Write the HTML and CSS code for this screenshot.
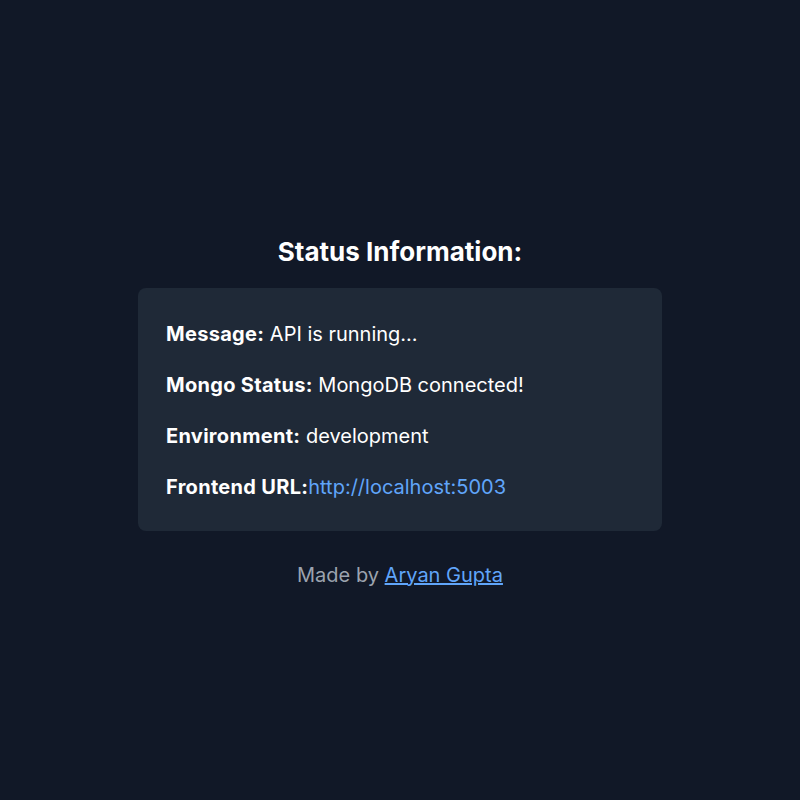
FILE: index.html
```html
<!DOCTYPE html>
<html lang="en">

<head>
    <meta charset="UTF-8">
    <meta name="viewport" content="width=device-width, initial-scale=1.0">
    <title>API Status</title>
    <link rel="stylesheet" href="styles.css">
</head>

<body>
    <main class="page">
        <h1 class="title">Status Information:</h1>

        <div class="card">
            <p class="row"><strong>Message:</strong> API is running...</p>
            <p class="row"><strong>Mongo Status:</strong> MongoDB connected!</p>
            <p class="row"><strong>Environment:</strong> development</p>
            <p class="row"><strong>Frontend URL:</strong><a class="url" href="#">http://localhost:5003</a></p>
        </div>

        <p class="footer">Made by <a href="#">Aryan Gupta</a></p>
    </main>
</body>

</html>
```

FILE: styles.css
```css
* {
    margin: 0;
    padding: 0;
    box-sizing: border-box;
}

body {
    font-family: Inter, 'Noto Sans', Arial, sans-serif;
    background: #111827;
    color: #f9fafb;
    min-height: 100vh;
}

.page {
    min-height: 100vh;
    display: flex;
    flex-direction: column;
    align-items: center;
    justify-content: center;
    padding-top: 24px;
}

.title {
    font-size: 26px;
    line-height: 32px;
    font-weight: 700;
    color: #ffffff;
    margin-bottom: 20px;
}

.card {
    width: 524px;
    background: #1f2937;
    border-radius: 8px;
    padding: 32px 28px 30px;
    display: flex;
    flex-direction: column;
    gap: 23px;
}

.row {
    font-size: 20px;
    line-height: 28px;
    color: #ffffff;
}

.row strong {
    font-weight: 700;
    letter-spacing: 0.3px;
}

.url {
    color: #60a5fa;
    text-decoration: none;
}

.footer {
    margin-top: 30px;
    font-size: 20px;
    line-height: 28px;
    color: #9ca3af;
}

.footer a {
    color: #60a5fa;
}
```
